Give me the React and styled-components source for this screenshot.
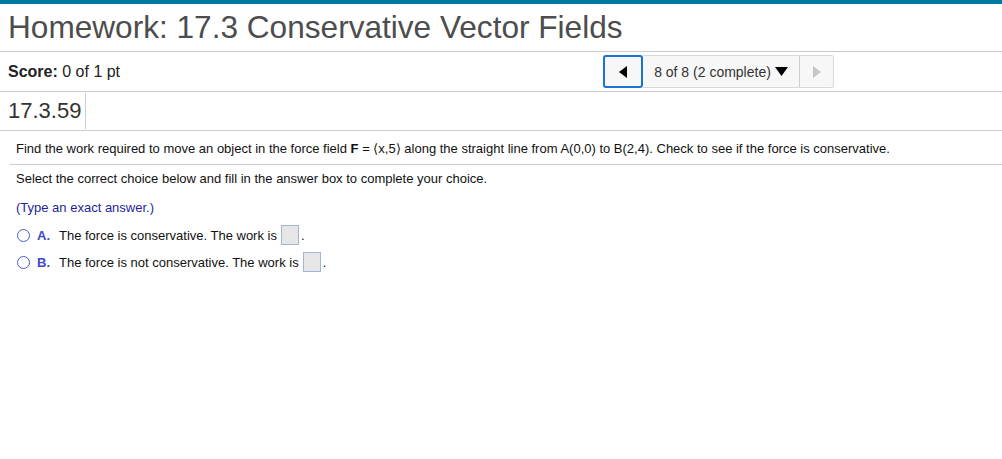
import React from "react";
import styled, { createGlobalStyle } from "styled-components";

const GlobalStyle = createGlobalStyle`
  html, body {
    margin: 0;
    padding: 0;
    background: #ffffff;
  }
  body {
    font-family: "Liberation Sans", Arial, Helvetica, sans-serif;
    color: #000000;
  }
`;

const lineColor = "#c9ccd6";

const Page = styled.div`
  width: 1002px;
  height: 459px;
  border-top: 4px solid #0079a1;
  box-sizing: border-box;
  overflow: hidden;
`;

const TitleBar = styled.div`
  height: 47px;
  display: flex;
  align-items: center;
  padding-left: 8px;
  border-bottom: 1px solid ${lineColor};
`;

const Title = styled.h1`
  margin: 0;
  font-size: 31.6px;
  font-weight: normal;
  color: #4d4d4d;
`;

const ScoreBar = styled.div`
  height: 39px;
  display: flex;
  align-items: center;
  justify-content: space-between;
  padding-left: 8px;
  border-bottom: 1px solid ${lineColor};
`;

const Score = styled.div`
  font-size: 16px;
  color: #222;

  b {
    font-weight: bold;
  }
`;

const Nav = styled.div`
  display: flex;
  align-items: stretch;
  height: 33px;
  margin-right: 168px;
`;

const NavButton = styled.button`
  width: ${(p) => p.$w}px;
  box-sizing: border-box;
  display: flex;
  align-items: center;
  justify-content: center;
  background: #f7f7f7;
  padding: 0;
  font-family: inherit;
  cursor: pointer;
  border: ${(p) => (p.$focus ? "2px solid #1a73d1" : "1px solid #d8d8d8")};
  border-radius: ${(p) => (p.$focus ? "3px" : p.$right ? "0 3px 3px 0" : "0")};
  ${(p) => (p.$right ? "border-left: 1px solid #cfcfcf;" : "")}
`;

const Dropdown = styled.div`
  width: 156px;
  box-sizing: border-box;
  display: flex;
  align-items: center;
  justify-content: center;
  gap: 4px;
  background: #f7f7f7;
  border-top: 1px solid #d8d8d8;
  border-bottom: 1px solid #d8d8d8;
  font-size: 14px;
  color: #333;
`;

const IdBar = styled.div`
  height: 38px;
  display: flex;
  align-items: stretch;
  border-bottom: 1px solid ${lineColor};
`;

const QuestionId = styled.div`
  width: 77px;
  padding-left: 8px;
  display: flex;
  align-items: center;
  font-size: 22px;
  color: #333;
  border-right: 1px solid ${lineColor};
  margin: 1px 0 1px;
`;

const Body = styled.div`
  padding: 0 0 0 10px;
`;

const Prompt = styled.div`
  padding: 10px 0 0 6px;
  height: 23px;
  font-size: 13px;
  color: #111;
  border-bottom: 1px solid ${lineColor};
`;

const Text = styled.div`
  font-size: 13px;
  color: ${(p) => p.$color || "#111"};
  padding-left: 6px;
  margin-top: ${(p) => p.$top}px;
  line-height: 15px;
`;

const Choice = styled.div`
  display: flex;
  align-items: center;
  margin-top: ${(p) => p.$top}px;
  padding-left: 7px;
  font-size: 13px;
  color: #111;
  height: 20px;
`;

const Radio = styled.span`
  width: 11px;
  height: 11px;
  border: 1.4px solid #4a5ed6;
  border-radius: 50%;
  display: inline-block;
  margin-right: 7px;
  box-sizing: content-box;
`;

const Letter = styled.span`
  color: #3b4bc9;
  font-weight: bold;
  width: 22px;
`;

const AnswerBox = styled.span`
  display: inline-block;
  width: 16px;
  height: 18px;
  background: #e6e6e6;
  border: 1px solid #9fb6da;
  margin: 0 2px 0 4px;
`;

const Caret = ({ dir, color }) => (
  <svg width="10" height="12" viewBox="0 0 10 12">
    {dir === "left" ? (
      <polygon points="9,0 9,12 1,6" fill={color} />
    ) : (
      <polygon points="1,0 1,12 9,6" fill={color} />
    )}
  </svg>
);

const Down = () => (
  <svg width="13" height="9" viewBox="0 0 13 9">
    <polygon points="0,0 13,0 6.5,9" fill="#000" />
  </svg>
);

export default function App() {
  return (
    <>
      <GlobalStyle />
      <Page>
        <TitleBar>
          <Title>Homework: 17.3 Conservative Vector Fields</Title>
        </TitleBar>
        <ScoreBar>
          <Score>
            <b>Score:</b> 0 of 1 pt
          </Score>
          <Nav>
            <NavButton $w={40} $focus>
              <Caret dir="left" color="#000" />
            </NavButton>
            <Dropdown>
              8 of 8 (2 complete) <Down />
            </Dropdown>
            <NavButton $w={35} $right>
              <Caret dir="right" color="#c6c6c6" />
            </NavButton>
          </Nav>
        </ScoreBar>
        <IdBar>
          <QuestionId>17.3.59</QuestionId>
        </IdBar>
        <Body>
          <Prompt>
            Find the work required to move an object in the force field{" "}
            <b>F</b> = ⟨x,5⟩ along the straight line from A(0,0) to B(2,4).
            Check to see if the force is conservative.
          </Prompt>
          <Text $top={6}>
            Select the correct choice below and fill in the answer box to
            complete your choice.
          </Text>
          <Text $top={14} $color="#1f1f9e">
            (Type an exact answer.)
          </Text>
          <Choice $top={10}>
            <Radio />
            <Letter>A.</Letter>
            The force is conservative. The work is <AnswerBox />.
          </Choice>
          <Choice $top={7}>
            <Radio />
            <Letter>B.</Letter>
            The force is not conservative. The work is <AnswerBox />.
          </Choice>
        </Body>
      </Page>
    </>
  );
}
